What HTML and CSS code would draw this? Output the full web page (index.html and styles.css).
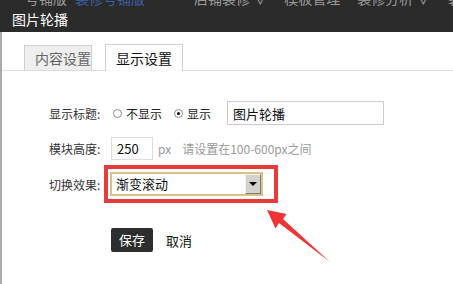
FILE: index.html
```html
<!DOCTYPE html>
<html lang="zh-CN">
<head>
<meta charset="utf-8">
<title>图片轮播</title>
<link rel="stylesheet" href="styles.css">
</head>
<body>
<div class="page">
  <div class="topnav">
    <div class="nav-line">
      <span class="nav-icon"></span>
      <span class="nav-sep s1"></span>
      <span class="nav-item i1">号铺版</span>
      <span class="nav-sep s2"></span>
      <span class="nav-item blue i2">装修号铺版</span>
      <span class="nav-sep s3"></span>
      <span class="nav-item i3">店铺装修 ∨</span>
      <span class="nav-item i4">模板管理</span>
      <span class="nav-item i5">装修分析 ∨</span>
      <span class="nav-item i6">装</span>
    </div>
  </div>
  <div class="titlebar">图片轮播</div>
  <div class="dialog">
    <div class="tabs">
      <div class="tab tab-inactive">内容设置</div>
      <div class="tab tab-active">显示设置</div>
    </div>
    <div class="form">
      <div class="row row1">
        <span class="label">显示标题:</span>
        <span class="radio"></span><span class="radio-text">不显示</span>
        <span class="radio checked"></span><span class="radio-text">显示</span>
        <span class="input title-input">图片轮播</span>
      </div>
      <div class="row row2">
        <span class="label">模块高度:</span>
        <span class="input height-input">250</span>
        <span class="unit">px</span>
        <span class="hint">请设置在100-600px之间</span>
      </div>
      <div class="row row3">
        <span class="label">切换效果:</span>
        <div class="highlight">
          <div class="select">
            <span class="select-text">渐变滚动</span>
            <span class="select-btn"><span class="tri"></span></span>
          </div>
        </div>
      </div>
      <div class="row buttons">
        <span class="btn-save">保存</span>
        <span class="btn-cancel">取消</span>
      </div>
    </div>
    <svg class="arrow" width="453" height="284" viewBox="0 0 453 284">
      <polygon points="267,210 286.5,214 283,219 330,262 279,223 275.5,228.5" fill="#ee3434"/>
    </svg>
  </div>
</div>
</body>
</html>
```

FILE: styles.css
```css
* { box-sizing: border-box; }
html, body { margin: 0; padding: 0; background: #fff; }
body {
  font-family: "Noto Sans CJK SC", "Noto Sans", "Liberation Sans", sans-serif;
  color: #333;
  width: 453px;
  height: 284px;
  overflow: hidden;
}
.page { display: flex; flex-direction: column; height: 284px; }

.topnav {
  height: 6px;
  background: #2b2b2b;
  overflow: hidden;
}
.nav-line {
  display: flex;
  align-items: center;
  height: 14px;
  margin-top: -9px;
  font-size: 14px;
  line-height: 14px;
  white-space: nowrap;
  color: #9a9a9a;
}
.nav-icon { width: 4px; height: 14px; background: #bbb; margin-left: 2px; border-radius: 2px; }
.nav-sep { width: 1px; height: 14px; background: #666; }
.s1 { margin-left: 16px; }
.i1 { margin-left: 7px; }
.s2 { margin-left: 3px; }
.i2 { margin-left: 5px; }
.s3 { margin-left: 7px; }
.blue { color: #3b5fa5; }
.i3 { margin-left: 42px; }
.i4 { margin-left: 17px; }
.i5 { margin-left: 17px; }
.i6 { margin-left: 18px; }

.titlebar {
  height: 26px;
  background: #2b2b2b;
  color: #fff;
  font-size: 14px;
  line-height: 26px;
  padding-left: 12px;
}

.dialog {
  position: relative;
  flex: 1;
  border-left: 2px solid #aaaaaa;
}

.tabs {
  display: flex;
  align-items: flex-end;
  height: 39px;
  padding-left: 22px;
  border-bottom: 1px solid #dcdcdc;
}
.tab {
  font-size: 14px;
  height: 25px;
  line-height: 24px;
  border: 1px solid #cfcfcf;
  border-bottom: none;
}
.tab-inactive {
  width: 68px;
  padding-left: 10px;
  background: #eeeeee;
  color: #666;
}
.tab-active {
  width: 78px;
  height: 27px;
  line-height: 26px;
  margin-left: 13px;
  margin-bottom: -1px;
  padding-left: 10px;
  background: #fff;
  color: #111;
}

.form { display: flex; flex-direction: column; padding-left: 47px; }
.row { display: flex; align-items: center; font-size: 12px; }
.label { width: 62px; color: #333; font-size: 12px; }
.row1 { margin-top: 30px; height: 24px; }
.row2 { margin-top: 12px; height: 23px; }
.row3 { margin-top: 5px; height: 38px; }

.radio {
  width: 9px; height: 9px;
  border: 1px solid #8a8a8a;
  border-radius: 50%;
  margin-left: 2px;
  position: relative;
  background: #fff;
}
.radio.checked { margin-left: 12px; }
.radio.checked::after {
  content: "";
  position: absolute;
  left: 2px; top: 2px;
  width: 3px; height: 3px;
  border-radius: 50%;
  background: #000;
}
.radio-text { margin-left: 4px; color: #222; font-size: 12px; }

.input {
  display: flex;
  align-items: center;
  border: 1px solid #cccccc;
  font-size: 13px;
  color: #111;
  padding-left: 5px;
}
.title-input { width: 157px; height: 24px; margin-left: 16px; }
.height-input { width: 42px; height: 23px; border-color: #dddddd; }
.unit { margin-left: 5px; color: #999; }
.hint { margin-left: 11px; color: #999; }

.highlight {
  margin-left: -7px;
  border: 4px solid #e83c3c;
  padding: 3px 11px 3px 2px;
}
.select {
  display: flex;
  width: 153px;
  height: 24px;
  border: 2px solid #dcc08a;
  background: #fff;
}
.select-text { flex: 1; font-size: 13px; color: #111; padding-left: 4px; line-height: 20px; }
.select-btn {
  width: 16px;
  height: 20px;
  background: #d5d2cc;
  border-top: 1px solid #f4f2ee;
  border-left: 1px solid #f4f2ee;
  border-right: 1px solid #7a7a7a;
  border-bottom: 1px solid #7a7a7a;
  display: flex;
  align-items: center;
  justify-content: center;
}
.tri {
  width: 0; height: 0;
  border-left: 4px solid transparent;
  border-right: 4px solid transparent;
  border-top: 4px solid #000;
}

.buttons { margin-top: 25px; height: 24px; padding-left: 62px; }
.btn-save {
  width: 42px;
  height: 24px;
  background: #2e2e2e;
  color: #fff;
  border-radius: 2px;
  font-size: 13px;
  line-height: 24px;
  text-align: center;
}
.btn-cancel { margin-left: 13px; font-size: 13px; color: #111; }

.arrow {
  position: absolute;
  left: -2px;
  top: -32px;
  pointer-events: none;
}
```
